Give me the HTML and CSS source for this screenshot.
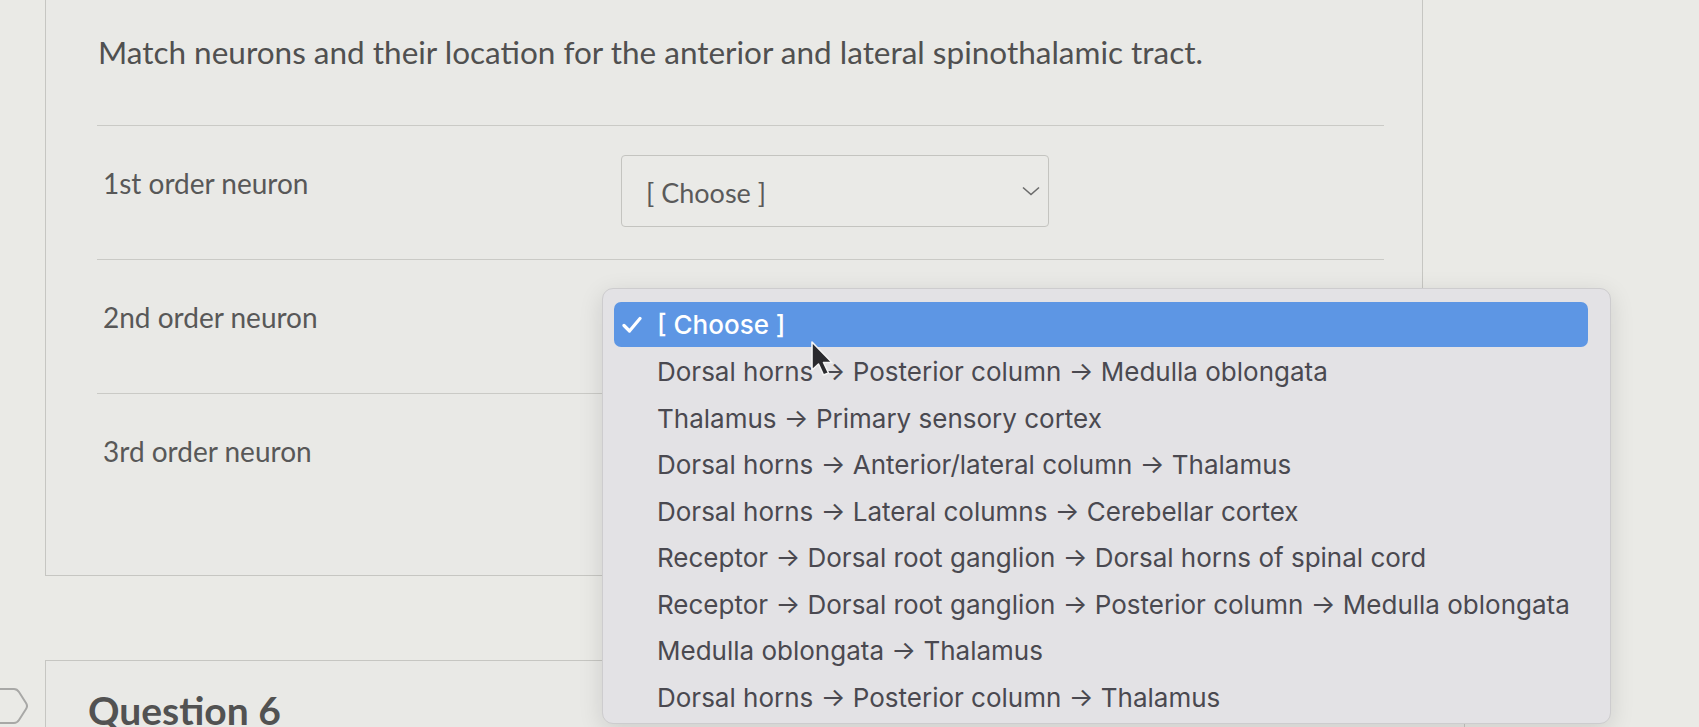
FILE: index.html
```html
<!DOCTYPE html>
<html lang="en">
<head>
    <meta charset="UTF-8">
    <meta name="viewport" content="width=device-width, initial-scale=1.0">
    <title>Question 5</title>
    <link rel="stylesheet" href="styles.css">
</head>
<body>
    <div class="page">
        <div class="question">
            <p class="question-text">Match neurons and their location for the anterior and lateral spinothalamic tract.</p>
            <div class="answers">
                <div class="answer-row">
                    <div class="answer-label">1st order neuron</div>
                    <div class="select-box">
                        <span>[ Choose ]</span>
                        <svg class="chevron" width="18" height="10" viewBox="0 0 18 10"><polyline points="1,1.5 9,8.5 17,1.5" fill="none" stroke="#6b6b6b" stroke-width="1.6"/></svg>
                    </div>
                </div>
                <div class="answer-row">
                    <div class="answer-label">2nd order neuron</div>
                    <div class="select-box">
                        <span>[ Choose ]</span>
                        <svg class="chevron" width="18" height="10" viewBox="0 0 18 10"><polyline points="1,1.5 9,8.5 17,1.5" fill="none" stroke="#6b6b6b" stroke-width="1.6"/></svg>
                    </div>
                </div>
                <div class="answer-row">
                    <div class="answer-label">3rd order neuron</div>
                    <div class="select-box">
                        <span>[ Choose ]</span>
                        <svg class="chevron" width="18" height="10" viewBox="0 0 18 10"><polyline points="1,1.5 9,8.5 17,1.5" fill="none" stroke="#6b6b6b" stroke-width="1.6"/></svg>
                    </div>
                </div>
            </div>
        </div>

        <div class="question next-question">
            <h2>Question 6</h2>
        </div>
    </div>

    <div class="collapse-btn">
        <svg width="36" height="44" viewBox="0 0 36 44"><path d="M-4 3 H22 Q25 3 27 6 L34 17 Q36 20 34 23 L27 34 Q25 37 22 37 H-4" fill="none" stroke="#a8a8a6" stroke-width="2"/></svg>
    </div>

    <div class="dropdown">
        <ul>
            <li class="selected">
                <svg class="check" width="20" height="18" viewBox="0 0 20 18"><polyline points="2,9.5 7.5,15 18,2.5" fill="none" stroke="#fff" stroke-width="3.2" stroke-linecap="round" stroke-linejoin="round"/></svg>
                [ Choose ]
            </li>
            <li>Dorsal horns → Posterior column → Medulla oblongata</li>
            <li>Thalamus → Primary sensory cortex</li>
            <li>Dorsal horns → Anterior/lateral column → Thalamus</li>
            <li>Dorsal horns → Lateral columns → Cerebellar cortex</li>
            <li>Receptor → Dorsal root ganglion → Dorsal horns of spinal cord</li>
            <li>Receptor → Dorsal root ganglion → Posterior column → Medulla oblongata</li>
            <li>Medulla oblongata → Thalamus</li>
            <li>Dorsal horns → Posterior column → Thalamus</li>
        </ul>
    </div>

    <svg class="cursor" width="26" height="38" viewBox="0 0 26 38"><path d="M2 2 L2 30 L8.5 24 L13.5 35 L18.5 33 L13.5 22.5 L22 22.5 Z" fill="#2a2a2e" stroke="#f4f4f4" stroke-width="1.6" stroke-linejoin="round"/></svg>
</body>
</html>
```

FILE: styles.css
```css
body, html {
    margin: 0;
    padding: 0;
    height: 100%;
    overflow: hidden;
    background-color: #eaeae6;
    font-family: 'Lato', 'Open Sans', sans-serif;
    color: #5a5a5a;
}

.page {
    padding-left: 45px;
}

.question {
    width: 1376px;
    background-color: #e9e9e6;
    border: 1px solid #c6c6c2;
    border-top: 0;
    padding-top: 33px;
    padding-bottom: 48px;
}

.question-text {
    margin: 0 0 54px 52px;
    font-size: 31.5px;
    line-height: 38px;
    color: #505050;
}

.answers {
    margin: 0 38px 0 51px;
}

.answer-row {
    display: flex;
    border-top: 1px solid #cacac6;
    padding: 29px 0 32px;
}

.answer-label {
    width: 518px;
    padding: 11px 0 0 6px;
    font-size: 28px;
    line-height: 34px;
    color: #585858;
}

.select-box {
    display: flex;
    align-items: center;
    justify-content: space-between;
    box-sizing: border-box;
    width: 428px;
    height: 72px;
    padding: 3px 8px 0 24px;
    border: 1px solid #c4c4c0;
    border-radius: 4px;
    background-color: #eaeae7;
    font-size: 27px;
    color: #5a5a5a;
}

.chevron {
    margin-bottom: 3px;
}

.next-question {
    margin-top: 84px;
    border-top: 1px solid #c6c6c2;
    border-bottom: 0;
    padding: 26px 0 0 42px;
}

.next-question h2 {
    margin: 0;
    font-size: 39px;
    line-height: 46px;
    font-weight: 700;
    color: #525252;
}

.collapse-btn {
    position: absolute;
    left: -8px;
    top: 686px;
}

.dropdown {
    position: absolute;
    left: 602px;
    top: 288px;
    width: 1009px;
    height: 436px;
    box-sizing: border-box;
    padding: 13px 22px 0 11px;
    background-color: #e3e2e5;
    border: 1px solid #cdccce;
    border-radius: 11px;
    box-shadow: 0 6px 24px rgba(0, 0, 0, 0.12);
    font-family: 'Inter', 'Noto Sans', sans-serif;
}

.dropdown ul {
    list-style: none;
    margin: 0;
    padding: 0;
}

.dropdown li {
    display: flex;
    align-items: center;
    height: 46.5px;
    padding-left: 43px;
    font-size: 26px;
    color: #4a4950;
    white-space: nowrap;
}

.dropdown li.selected {
    position: relative;
    height: 45px;
    margin-bottom: 1.5px;
    border-radius: 7px;
    background-color: #5d96e4;
    color: #fff;
    font-weight: 500;
}

.check {
    position: absolute;
    left: 8px;
    top: 14px;
}

.cursor {
    position: absolute;
    left: 810px;
    top: 340px;
}
```
